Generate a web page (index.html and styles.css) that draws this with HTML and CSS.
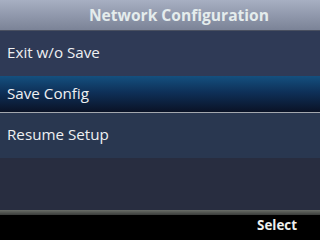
FILE: index.html
```html
<!DOCTYPE html>
<html lang="en">
<head>
    <meta charset="UTF-8">
    <title>Network Configuration</title>
    <link rel="stylesheet" href="styles.css">
</head>
<body>
    <div class="screen">
        <div class="title-bar">Network Configuration</div>

        <div class="menu">
            <div class="menu-item">Exit w/o Save</div>
            <div class="menu-item selected">Save Config</div>
            <div class="menu-item">Resume Setup</div>
        </div>

        <div class="soft-keys">
            <span class="soft-key"></span>
            <span class="soft-key"></span>
            <span class="soft-key">Select</span>
        </div>
    </div>
</body>
</html>
```

FILE: styles.css
```css
* {
    margin: 0;
    padding: 0;
    box-sizing: border-box;
}

body {
    font-family: 'Open Sans', 'DejaVu Sans', sans-serif;
    width: 320px;
    height: 240px;
    overflow: hidden;
    background: #000;
}

.screen {
    width: 320px;
    height: 240px;
    display: flex;
    flex-direction: column;
}

.title-bar {
    height: 31px;
    background: linear-gradient(#a7afc2, #7b8397);
    border-bottom: 1px solid #4a5060;
    color: #e4ecec;
    font-weight: bold;
    font-size: 15.6px;
    text-align: right;
    padding-right: 51px;
    line-height: 30px;
}

.menu {
    flex: 1;
    background: #282d40;
    display: flex;
    flex-direction: column;
}

.menu-item {
    height: 45px;
    padding-left: 7px;
    color: #eef0f2;
    font-size: 15.2px;
    line-height: 42px;
    background: #2f3a56;
}

.menu-item:nth-child(3) {
    background: #293750;
}

.menu-item.selected {
    height: 37px;
    line-height: 34px;
    background: linear-gradient(#14507f, #0e3058 45%, #0a1226);
    border-bottom: 1px solid #a3a7ae;
}

.soft-keys {
    height: 30px;
    background: linear-gradient(#6a6e68, #3a3c3a 5px, #000 5px);
    padding-top: 5px;
    display: flex;
}

.soft-key {
    flex: 1;
    color: #eef0ee;
    font-weight: bold;
    font-size: 13.4px;
    text-align: right;
    padding-right: 23px;
    line-height: 20px;
}
```
